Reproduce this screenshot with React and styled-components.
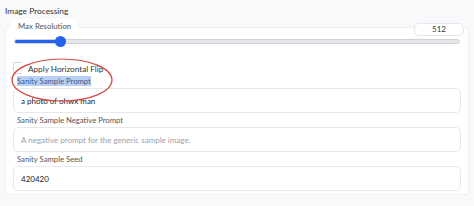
import React from "react";
import styled, { createGlobalStyle } from "styled-components";

const GlobalStyle = createGlobalStyle`
  html, body {
    margin: 0;
    padding: 0;
    background: #f8f9fb;
    font-family: Lato, "Open Sans", sans-serif;
  }
`;

const Page = styled.div`
  width: 474px;
  height: 206px;
  padding: 4px 5px 0 5px;
  box-sizing: border-box;
  overflow: hidden;
`;

const Title = styled.div`
  font-size: 8.4px;
  color: #333;
  line-height: 14px;
  height: 14px;
`;

const Panel = styled.div`
  position: relative;
  margin-top: 9px;
  background: #fff;
  border: 1px solid #eceef1;
  border-radius: 3px;
  padding: 0 7px 6px 7px;
  height: 168px;
  box-sizing: border-box;
`;

const SliderHeader = styled.div`
  display: flex;
  justify-content: space-between;
  align-items: flex-start;
  margin-top: -9px;
  margin-left: -2px;
`;

const Chip = styled.div`
  background: #fff;
  border-radius: 4px;
  padding: 0 6px 0 7px;
  height: 15px;
  line-height: 15px;
  font-size: 7.8px;
  color: #555;
`;

const NumberBox = styled.div`
  margin-top: 4px;
  margin-right: -3px;
  width: 50px;
  height: 13px;
  box-sizing: border-box;
  border: 1px solid #e6e8eb;
  border-radius: 5px;
  background: #fff;
  font-size: 8px;
  line-height: 11px;
  text-align: center;
  color: #333;
`;

const SliderTrack = styled.div`
  position: relative;
  margin: 3px 1px 0 1px;
  height: 3px;
  background: #e5e7eb;
  border: 1px solid #cfd2d6;
  border-radius: 3px;
`;

const SliderFill = styled.div`
  height: 100%;
  background: #2563eb;
  border-radius: 3px;
`;

const Thumb = styled.div`
  position: absolute;
  top: 50%;
  width: 11px;
  height: 11px;
  margin: -5.5px 0 0 -5.5px;
  border-radius: 50%;
  background: #2563eb;
`;

const CheckRow = styled.div`
  display: flex;
  align-items: center;
  gap: 6px;
  margin-top: 18px;
  height: 12px;
`;

const Box = styled.div`
  width: 9px;
  height: 12px;
  box-sizing: border-box;
  border: 1px solid #d4d6da;
  border-right: none;
  border-radius: 2px 0 0 2px;
  background: #fff;
`;

const CheckText = styled.span`
  font-size: 8.2px;
  color: #333;
  margin-top: 2px;
`;

const Label = styled.div`
  font-size: 7.7px;
  color: ${(p) => (p.$selected ? "#3d5a8c" : "#555")};
  line-height: 12px;
  height: 12px;
  padding-left: 4px;
  margin-top: 1px;
  span {
    background: ${(p) => (p.$selected ? "#b8d0f3" : "transparent")};
  }
`;

const Input = styled.div`
  margin-top: 1px;
  height: 25px;
  box-sizing: border-box;
  border: 1px solid #e8e9ec;
  border-radius: 5px;
  padding: 0 7px;
  display: flex;
  align-items: center;
  font-size: 8px;
  color: ${(p) => (p.$placeholder ? "#9ca0a6" : "#222")};
`;

const Ellipse = styled.svg`
  position: absolute;
  left: 4px;
  top: 30px;
  overflow: visible;
  pointer-events: none;
`;

export default function App() {
  const pct = 10.3;
  return (
    <>
      <GlobalStyle />
      <Page>
        <Title>Image Processing</Title>
        <Panel>
          <SliderHeader>
            <Chip>Max Resolution</Chip>
            <NumberBox>512</NumberBox>
          </SliderHeader>
          <SliderTrack>
            <SliderFill style={{ width: `${pct}%` }} />
            <Thumb style={{ left: `${pct}%` }} />
          </SliderTrack>
          <CheckRow>
            <Box />
            <CheckText>Apply Horizontal Flip</CheckText>
          </CheckRow>
          <Label $selected>
            <span>Sanity Sample Prompt</span>
          </Label>
          <Input>a photo of ohwx man</Input>
          <Label>Sanity Sample Negative Prompt</Label>
          <Input $placeholder>A negative prompt for the generic sample image.</Input>
          <Label>Sanity Sample Seed</Label>
          <Input>420420</Input>
          <Ellipse width="104" height="44">
            <ellipse cx="52" cy="22" rx="50" ry="21" fill="none" stroke="#cf4a44" strokeWidth="1.2" />
          </Ellipse>
        </Panel>
      </Page>
    </>
  );
}
